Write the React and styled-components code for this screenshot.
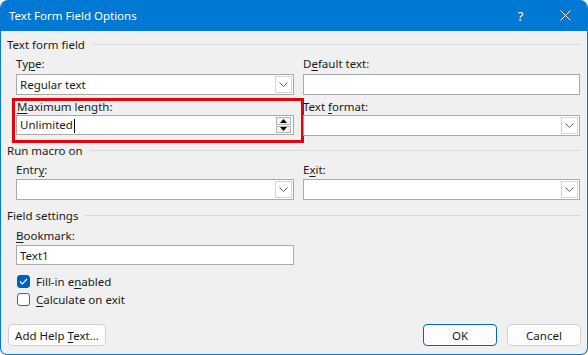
import React from "react";
import styled, { createGlobalStyle } from "styled-components";

const Global = createGlobalStyle`
  html, body {
    margin: 0;
    padding: 0;
    background: #ffffff;
  }
  * {
    box-sizing: border-box;
  }
`;

const Window = styled.div`
  width: 588px;
  height: 355px;
  background: #f0f0f0;
  border: 1px solid #0078d4;
  border-top: none;
  border-radius: 8px 8px 7px 7px;
  overflow: hidden;
  font-family: "Segoe UI", "Noto Sans", sans-serif;
  font-size: 11.5px;
  color: #1a1a1a;
  display: flex;
  flex-direction: column;
`;

const TitleBar = styled.div`
  height: 31px;
  background: #0078d4;
  color: #ffffff;
  display: flex;
  align-items: center;
  padding-left: 9px;
  margin: 0 -1px;
`;

const Title = styled.span`
  flex: 1;
  font-size: 11.5px;
`;

const TitleButton = styled.div`
  width: 45px;
  height: 31px;
  display: flex;
  align-items: center;
  justify-content: center;
  color: #ffffff;
  font-size: 13px;
`;

const Content = styled.div`
  flex: 1;
  padding: 6px 6px 8px 6px;
  display: flex;
  flex-direction: column;
`;

const GroupHeader = styled.div`
  display: flex;
  align-items: center;
  height: 14px;
  margin-top: ${(p) => p.top || 0}px;
  &::after {
    content: "";
    flex: 1;
    height: 1px;
    background: #dadada;
    margin-left: 7px;
    margin-top: 1px;
  }
`;

const Row = styled.div`
  display: grid;
  grid-template-columns: 278px 277px;
  column-gap: 9px;
  padding-left: 9px;
  margin-top: ${(p) => p.top || 0}px;
`;

const Cell = styled.div`
  position: relative;
  display: flex;
  flex-direction: column;
`;

const Label = styled.div`
  height: 14px;
  line-height: 14px;
  margin-bottom: ${(p) => p.gap ?? 3}px;
  margin-left: ${(p) => p.indent || 0}px;
`;

const Key = styled.span`
  text-decoration: underline;
  text-underline-offset: 2px;
`;

const Field = styled.div`
  height: ${(p) => p.h || 20}px;
  background: #ffffff;
  border: 1px solid #a9a9a9;
  display: flex;
  align-items: center;
  padding-left: 3px;
  position: relative;
`;

const FieldText = styled.span`
  flex: 1;
  white-space: nowrap;
`;

const Caret = styled.span`
  display: inline-block;
  width: 1px;
  height: 14px;
  background: #000;
  vertical-align: middle;
  margin-left: 1px;
`;

const DropButton = styled.div`
  width: 17px;
  align-self: stretch;
  margin: 1px;
  border: 1px solid #d6d6d6;
  background: #ffffff;
  display: flex;
  align-items: center;
  justify-content: center;
`;

const Spin = styled.div`
  width: 15px;
  align-self: stretch;
  margin: 1px 2px 1px 0;
  display: flex;
  flex-direction: column;
  gap: 1px;
`;

const SpinButton = styled.div`
  flex: 1;
  background: #f3f3f3;
  border: 1px solid #b5b5b5;
  display: flex;
  align-items: center;
  justify-content: center;
`;

const Highlight = styled.div`
  position: absolute;
  left: -4px;
  right: -10px;
  top: -2px;
  bottom: -7px;
  border: 3px solid #e5000b;
  pointer-events: none;
`;

const CheckRow = styled.div`
  display: flex;
  align-items: center;
  gap: 6px;
  padding-left: 10px;
  height: 14px;
  margin-top: ${(p) => p.top || 0}px;
`;

const Box = styled.div`
  width: 13px;
  height: 13px;
  border-radius: 3px;
  border: 1px solid ${(p) => (p.checked ? "#005fb8" : "#5c5c5c")};
  background: ${(p) => (p.checked ? "#005fb8" : "#ffffff")};
  display: flex;
  align-items: center;
  justify-content: center;
`;

const Footer = styled.div`
  margin-top: auto;
  display: flex;
  align-items: center;
  padding-left: 1px;
`;

const Button = styled.div`
  height: 22px;
  width: ${(p) => p.w}px;
  margin-left: ${(p) => p.gap || 0}px;
  background: #fdfdfd;
  border: 1px solid ${(p) => (p.primary ? "#0067c0" : "#d0d0d0")};
  border-radius: 4px;
  display: flex;
  align-items: center;
  justify-content: center;
`;

const Spacer = styled.div`
  flex: 1;
`;

function Chevron() {
  return (
    <svg width="9" height="5" viewBox="0 0 9 5">
      <path d="M0.5 0.5 L4.5 4.5 L8.5 0.5" fill="none" stroke="#606060" strokeWidth="1" />
    </svg>
  );
}

function Select({ value }) {
  return (
    <Field h={21}>
      <FieldText>{value}</FieldText>
      <DropButton>
        <Chevron />
      </DropButton>
    </Field>
  );
}

export default function App() {
  return (
    <>
      <Global />
      <Window>
        <TitleBar>
          <Title>Text Form Field Options</Title>
          <TitleButton>?</TitleButton>
          <TitleButton>
            <svg width="11" height="11" viewBox="0 0 11 11">
              <path d="M0.5 0.5 L10.5 10.5 M10.5 0.5 L0.5 10.5" stroke="#fff" strokeWidth="1" />
            </svg>
          </TitleButton>
        </TitleBar>
        <Content>
          <GroupHeader>Text form field</GroupHeader>
          <Row top={6}>
            <Cell>
              <Label>
                Ty<Key>p</Key>e:
              </Label>
              <Select value="Regular text" />
            </Cell>
            <Cell>
              <Label>
                D<Key>e</Key>fault text:
              </Label>
              <Field h={21} />
            </Cell>
          </Row>
          <Row top={5}>
            <Cell>
              <Label indent={1} gap={1}>
                <Key>M</Key>aximum length:
              </Label>
              <Field>
                <FieldText>
                  Unlimited
                  <Caret />
                </FieldText>
                <Spin>
                  <SpinButton>
                    <svg width="7" height="4" viewBox="0 0 7 4">
                      <path d="M3.5 0 L7 4 L0 4 Z" fill="#000" />
                    </svg>
                  </SpinButton>
                  <SpinButton>
                    <svg width="7" height="4" viewBox="0 0 7 4">
                      <path d="M0 0 L7 0 L3.5 4 Z" fill="#000" />
                    </svg>
                  </SpinButton>
                </Spin>
              </Field>
              <Highlight />
            </Cell>
            <Cell>
              <Label gap={1}>
                Text <Key>f</Key>ormat:
              </Label>
              <Select value="" />
            </Cell>
          </Row>
          <GroupHeader top={7}>Run macro on</GroupHeader>
          <Row top={6}>
            <Cell>
              <Label gap={2}>
                Entr<Key>y</Key>:
              </Label>
              <Select value="" />
            </Cell>
            <Cell>
              <Label gap={2}>
                E<Key>x</Key>it:
              </Label>
              <Select value="" />
            </Cell>
          </Row>
          <GroupHeader top={8}>Field settings</GroupHeader>
          <Row top={7}>
            <Cell>
              <Label gap={2}>
                <Key>B</Key>ookmark:
              </Label>
              <Field>
                <FieldText>Text1</FieldText>
              </Field>
            </Cell>
          </Row>
          <CheckRow top={9}>
            <Box checked>
              <svg width="9" height="7" viewBox="0 0 9 7">
                <path d="M1 3.5 L3.3 5.8 L8 1" fill="none" stroke="#fff" strokeWidth="1.2" />
              </svg>
            </Box>
            <span>
              Fill-in e<Key>n</Key>abled
            </span>
          </CheckRow>
          <CheckRow top={4}>
            <Box />
            <span>
              <Key>C</Key>alculate on exit
            </span>
          </CheckRow>
          <Footer>
            <Button w={98}>
              <span>
                Add Help <Key>T</Key>ext...
              </span>
            </Button>
            <Spacer />
            <Button w={74} primary>
              OK
            </Button>
            <Button w={74} gap={10}>
              Cancel
            </Button>
          </Footer>
        </Content>
      </Window>
    </>
  );
}
